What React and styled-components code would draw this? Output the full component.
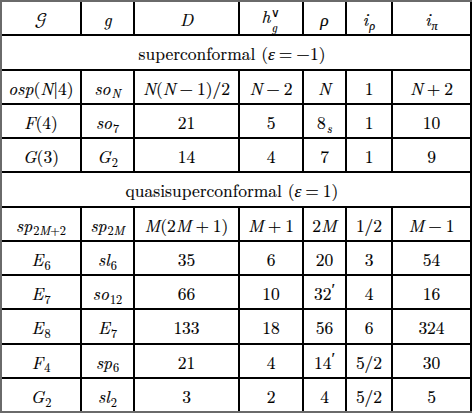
import React from "react";
import styled, { createGlobalStyle } from "styled-components";

const SERIF = `"Latin Modern Roman", "CMU Serif", "Liberation Serif", "Times New Roman", serif`;

const Global = createGlobalStyle`
  html, body { margin: 0; padding: 0; background: #ffffff; }
  body { font-family: ${SERIF}; }
`;

const Table = styled.div`
  display: grid;
  grid-template-columns: 78px 51px 103px 62px 41px 44px 77px;
  grid-template-rows: repeat(12, 32.25px);
  gap: 2px;
  width: max-content;
  padding: 2px;
  background: #000000;
  box-shadow: inset 2px 0 0 #6a6a6a, inset 0 2px 0 #6a6a6a, inset 0 -2px 0 #6a6a6a;
`;

const Cell = styled.div`
  background: #ffffff;
  display: flex;
  align-items: center;
  justify-content: center;
  font-family: ${SERIF};
  font-size: 17.5px;
  color: #000;
  -webkit-text-stroke: 0.15px #000;
  white-space: nowrap;
  padding-top: 1px;
`;

const SpanCell = styled(Cell)`
  grid-column: 1 / -1;
  padding-right: 8px;
`;

const I = styled.span`
  font-family: ${SERIF};
  font-style: italic;
`;

const Sub = styled.span`
  font-size: 0.7em;
  position: relative;
  top: 0.3em;
  line-height: 0;
  margin-left: 1px;
`;

const Prime = styled.span`
  font-size: 0.95em;
  position: relative;
  top: -0.3em;
  line-height: 0;
`;

const Stack = styled.span`
  display: inline-flex;
  flex-direction: column;
  align-items: flex-start;
  vertical-align: middle;
  font-size: 0.68em;
  line-height: 1.25;
  margin-left: 1px;
  position: relative;
  top: 0.05em;
`;

const Op = styled.span`
  margin: 0 0.22em;
`;

const Script = styled.span`
  font-family: "Latin Modern Math", "DejaVu Serif", "Liberation Serif", serif;
  font-size: 18px;
`;

const m = (s) => <I>{s}</I>;

const rows = [
  [
    <Script>𝒢</Script>,
    m("g"),
    m("D"),
    <span>
      {m("h")}
      <Stack>
        <span>∨</span>
        <I>g</I>
      </Stack>
    </span>,
    m("ρ"),
    <span>{m("i")}<Sub><I>ρ</I></Sub></span>,
    <span>{m("i")}<Sub><I>π</I></Sub></span>,
  ],
  "superconformal",
  [
    <span><I>osp</I>(<I>N</I>|4)</span>,
    <span><I>so</I><Sub><I>N</I></Sub></span>,
    <span><I>N</I>(<I>N</I><Op>−</Op>1)/2</span>,
    <span><I>N</I><Op>−</Op>2</span>,
    m("N"),
    "1",
    <span><I>N</I><Op>+</Op>2</span>,
  ],
  [
    <span><I>F</I>(4)</span>,
    <span><I>so</I><Sub>7</Sub></span>,
    "21",
    "5",
    <span>8<Sub><I>s</I></Sub></span>,
    "1",
    "10",
  ],
  [
    <span><I>G</I>(3)</span>,
    <span><I>G</I><Sub>2</Sub></span>,
    "14",
    "4",
    "7",
    "1",
    "9",
  ],
  "quasi",
  [
    <span><I>sp</I><Sub>2<I>M</I>+2</Sub></span>,
    <span><I>sp</I><Sub>2<I>M</I></Sub></span>,
    <span><I>M</I>(2<I>M</I><Op>+</Op>1)</span>,
    <span><I>M</I><Op>+</Op>1</span>,
    <span>2<I>M</I></span>,
    "1/2",
    <span><I>M</I><Op>−</Op>1</span>,
  ],
  [<span><I>E</I><Sub>6</Sub></span>, <span><I>sl</I><Sub>6</Sub></span>, "35", "6", "20", "3", "54"],
  [<span><I>E</I><Sub>7</Sub></span>, <span><I>so</I><Sub>12</Sub></span>, "66", "10", <span>32<Prime>′</Prime></span>, "4", "16"],
  [<span><I>E</I><Sub>8</Sub></span>, <span><I>E</I><Sub>7</Sub></span>, "133", "18", "56", "6", "324"],
  [<span><I>F</I><Sub>4</Sub></span>, <span><I>sp</I><Sub>6</Sub></span>, "21", "4", <span>14<Prime>′</Prime></span>, "5/2", "30"],
  [<span><I>G</I><Sub>2</Sub></span>, <span><I>sl</I><Sub>2</Sub></span>, "3", "2", "4", "5/2", "5"],
];

export default function App() {
  return (
    <>
      <Global />
      <Table>
        {rows.map((row, r) =>
          row === "superconformal" ? (
            <SpanCell key={r}>
              superconformal (<I>ε</I><Op>=</Op>−1)
            </SpanCell>
          ) : row === "quasi" ? (
            <SpanCell key={r}>
              quasisuperconformal (<I>ε</I><Op>=</Op>1)
            </SpanCell>
          ) : (
            row.map((c, i) => <Cell key={`${r}-${i}`}>{c}</Cell>)
          )
        )}
      </Table>
    </>
  );
}
